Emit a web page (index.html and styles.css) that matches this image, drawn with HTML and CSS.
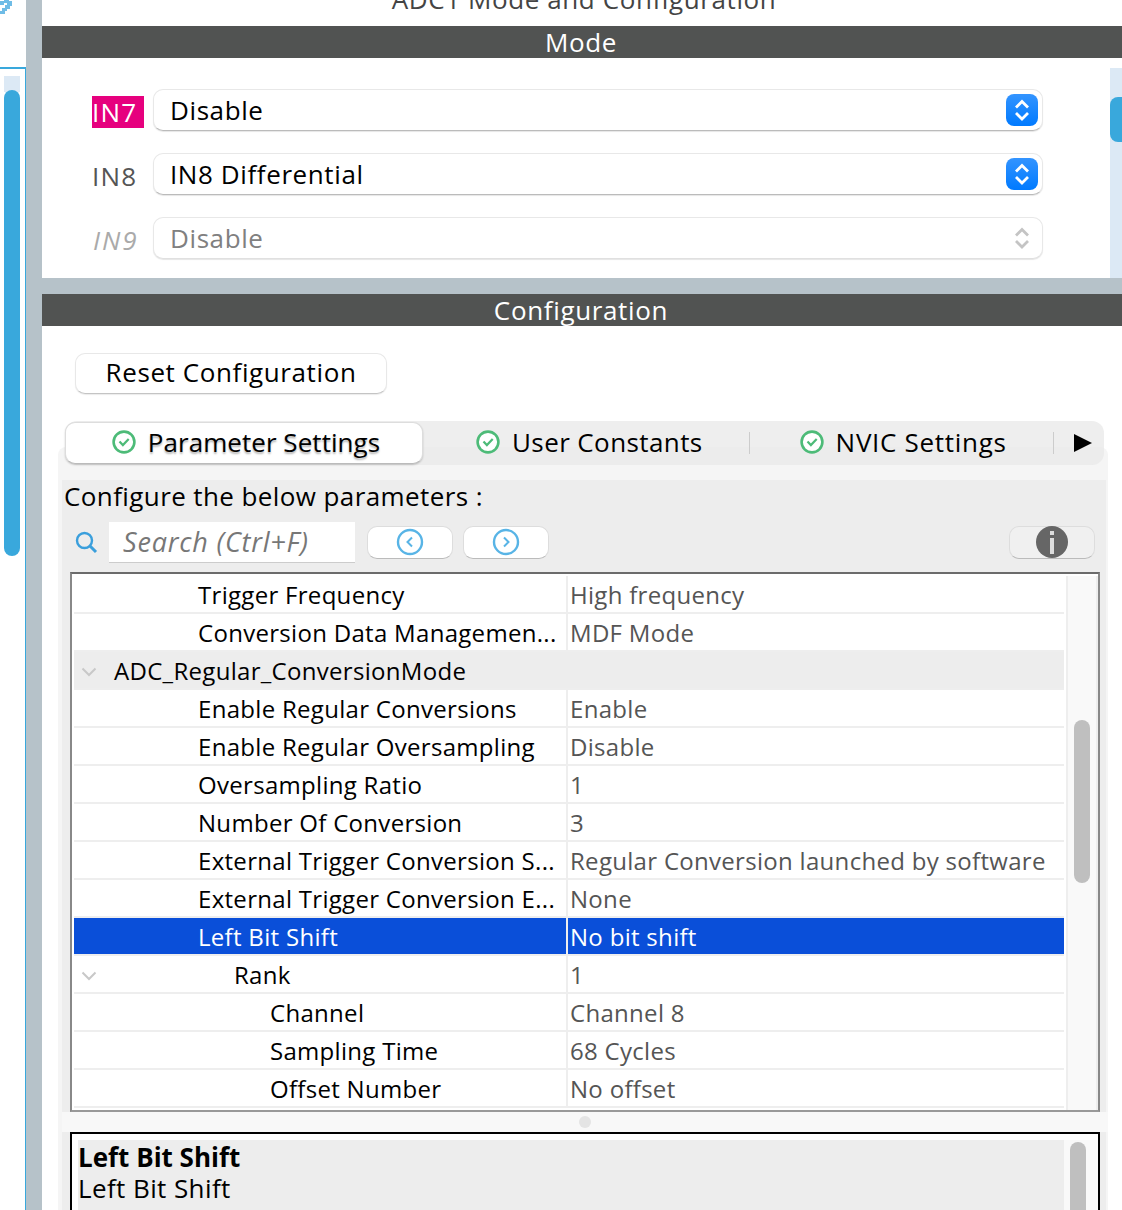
FILE: index.html
```html
<!DOCTYPE html>
<html lang="en">
<head>
<meta charset="utf-8">
<title>ADC1 Mode and Configuration</title>
<link rel="stylesheet" href="styles.css">
</head>
<body>
<svg class="defs" width="0" height="0" aria-hidden="true">
  <symbol id="ok" viewBox="0 0 24 24">
    <circle cx="12" cy="12" r="10.4" fill="#fff" stroke="#4dbb78" stroke-width="2.6"/>
    <path d="M7.5 11.5l3.4 3.6 5.8-6" fill="none" stroke="#4dbb78" stroke-width="2.2"/>
  </symbol>
  <symbol id="updown" viewBox="0 0 16 24">
    <path d="M2 9.500L8 3.500l6 6M2 15l6 6 6-6" fill="none" stroke="currentColor" stroke-width="2.800"/>
  </symbol>
  <symbol id="tw" viewBox="0 0 16 10">
    <path d="M1.500 1.500L8 8l6.500-6.500" fill="none" stroke="#c8c8c8" stroke-width="2"/>
  </symbol>
</svg>
<div class="side">
  <svg class="side-glyph" viewBox="0 0 12 14"><path d="M0 1h4V0h5v1h3v5h-2v3H7v2H5v3H0v-3h2V8h3V5h2V3H4v2H0z" fill="#6fbce6"/></svg>
  <div class="side-track"><div class="side-thumb"></div></div>
</div>
<div class="gutter"></div>
<main class="main">
  <div class="title"><span>ADC1 Mode and Configuration</span></div>
  <h2 class="bar">Mode</h2>
  <section class="mode">
    <div class="mode-rows">
      <div class="mode-row">
        <span class="pin pin-hot">IN7</span>
        <div class="select"><span>Disable</span><span class="stepper"><svg><use href="#updown"/></svg></span></div>
      </div>
      <div class="mode-row">
        <span class="pin">IN8</span>
        <div class="select"><span>IN8 Differential</span><span class="stepper"><svg><use href="#updown"/></svg></span></div>
      </div>
      <div class="mode-row off">
        <span class="pin">IN9</span>
        <div class="select"><span>Disable</span><span class="stepper"><svg><use href="#updown"/></svg></span></div>
      </div>
    </div>
    <div class="mode-track"><div class="mode-thumb"></div></div>
  </section>
  <div class="divider"></div>
  <h2 class="bar">Configuration</h2>
  <section class="config">
    <button class="reset">Reset Configuration</button>
    <div class="tabs">
      <div class="tab tab-on"><svg class="ok"><use href="#ok"/></svg><span>Parameter Settings</span></div>
      <div class="tab tab-user"><svg class="ok"><use href="#ok"/></svg><span>User Constants</span></div>
      <i class="tab-sep"></i>
      <div class="tab tab-nvic"><svg class="ok"><use href="#ok"/></svg><span>NVIC Settings</span></div>
      <i class="tab-sep"></i>
      <span class="tab-more"></span>
    </div>
    <div class="panel">
      <div class="panel-inner">
        <p class="lead">Configure the below parameters :</p>
        <div class="tools">
          <svg class="search" viewBox="0 0 24 24"><circle cx="10.500" cy="10.500" r="7.500" fill="none" stroke="#3a9fdc" stroke-width="2.400"/><path d="M16 16l6 6" stroke="#3a9fdc" stroke-width="3"/></svg>
          <div class="search-box">Search (Ctrl+F)</div>
          <button class="nav"><svg viewBox="0 0 28 28"><circle cx="14" cy="14" r="12" fill="none" stroke="#58b4e6" stroke-width="2.400"/><path d="M16 9.500L11.500 14l4.500 4.500" fill="none" stroke="#58b4e6" stroke-width="2"/></svg></button>
          <button class="nav"><svg viewBox="0 0 28 28"><circle cx="14" cy="14" r="12" fill="none" stroke="#58b4e6" stroke-width="2.400"/><path d="M12 9.500L16.500 14 12 18.500" fill="none" stroke="#58b4e6" stroke-width="2"/></svg></button>
          <button class="nav info"><svg viewBox="0 0 32 32"><circle cx="16" cy="16" r="16" fill="#666"/><rect x="14" y="5" width="4" height="4" fill="#ddd"/><rect x="14" y="12" width="4" height="16" fill="#ddd"/></svg></button>
        </div>
        <div class="table">
          <div class="rows">
            <div class="row l1"><span class="k">Trigger Frequency</span><span class="v">High frequency</span></div>
            <div class="row l1"><span class="k">Conversion Data Managemen...</span><span class="v">MDF Mode</span></div>
            <div class="row group"><span class="k"><svg class="tw"><use href="#tw"/></svg>ADC_Regular_ConversionMode</span><span class="v"></span></div>
            <div class="row l1"><span class="k">Enable Regular Conversions</span><span class="v">Enable</span></div>
            <div class="row l1"><span class="k">Enable Regular Oversampling</span><span class="v">Disable</span></div>
            <div class="row l1"><span class="k">Oversampling Ratio</span><span class="v">1</span></div>
            <div class="row l1"><span class="k">Number Of Conversion</span><span class="v">3</span></div>
            <div class="row l1"><span class="k">External Trigger Conversion S...</span><span class="v">Regular Conversion launched by software</span></div>
            <div class="row l1"><span class="k">External Trigger Conversion E...</span><span class="v">None</span></div>
            <div class="row l1 sel"><span class="k">Left Bit Shift</span><span class="v">No bit shift</span></div>
            <div class="row l2"><span class="k"><svg class="tw"><use href="#tw"/></svg>Rank</span><span class="v">1</span></div>
            <div class="row l3"><span class="k">Channel</span><span class="v">Channel 8</span></div>
            <div class="row l3"><span class="k">Sampling Time</span><span class="v">68 Cycles</span></div>
            <div class="row l3"><span class="k">Offset Number</span><span class="v">No offset</span></div>
          </div>
          <div class="vscroll"><div class="vthumb"></div></div>
        </div>
        <div class="sash"><i></i></div>
        <div class="desc">
          <div class="desc-text"><b>Left Bit Shift</b><span>Left Bit Shift</span></div>
          <div class="desc-scroll"><div class="desc-thumb"></div></div>
        </div>
      </div>
    </div>
  </section>
</main>
</body>
</html>
```
FILE: styles.css
```css
* { box-sizing: border-box; }
html, body { margin: 0; height: 1210px; overflow: hidden; }
body {
  display: flex;
  background: #fff;
  color: #000;
  font-family: "Open Sans", "DejaVu Sans", sans-serif;
  font-size: 26px;
  letter-spacing: 0.4px;
}
.defs { position: absolute; }
.side { width: 26px; flex: none; position: relative; padding-top: 67px; }
.side-glyph { position: absolute; left: 0; top: 0; width: 12px; height: 14px; }
.side-track {
  height: 1143px; width: 26px;
  border-top: 2px solid #39a8dc; border-right: 1px solid #39a8dc;
  padding: 7px 5px 0 4px;
  background: linear-gradient(#dce9f5, #dce9f5) 4px 7px / 16px 16px no-repeat;
}
.side-thumb { width: 16px; height: 466px; margin-top: 14px; background: #39a8dc; border-radius: 8px; }
.gutter { width: 16px; flex: none; background: #b6c2c9; }
.main { flex: 1; min-width: 0; height: 1210px; overflow: hidden; display: flex; flex-direction: column; }
.title { height: 26px; flex: none; overflow: hidden; text-align: center; color: #444; line-height: 26px; letter-spacing: .6px; }
.title span { display: block; margin: -14px 0 0 4px; white-space: nowrap; }
.bar {
  margin: 0; height: 32px; flex: none; background: #515352; color: #fff;
  font-size: 26px; font-weight: 400; line-height: 32px; text-align: center; padding-right: 2px; letter-spacing: .65px;
}
.mode { height: 220px; flex: none; display: flex; justify-content: space-between; padding-top: 10px; }
.mode-rows { width: 1001px; padding: 21px 0 0 50px; display: flex; flex-direction: column; gap: 22px; }
.mode-row { display: flex; align-items: center; height: 42px; }
.pin { width: 52px; height: 32px; line-height: 32px; margin: 4px 9px 0 0; color: #555; text-align: left; flex: none; letter-spacing: 1.2px; }
.pin-hot { background: #e6007e; color: #fff; }
.select {
  flex: 1; height: 42px; margin: 0; display: flex; justify-content: space-between; align-items: center; letter-spacing: .6px;
  padding: 0 4px 0 16px; border-radius: 10px; background: #fff;
  border: 1px solid #e8e8e8; border-bottom-color: #bbb; box-shadow: 0 1px 1px rgba(0,0,0,.1);
}
.stepper {
  width: 32px; height: 32px; border-radius: 8px; flex: none;
  background: linear-gradient(#3394ff, #007aff); color: #fff;
  display: flex; align-items: center; justify-content: center;
}
.stepper svg { width: 16px; height: 24px; }
.off .pin { color: #aaa; font-style: italic; letter-spacing: 2px; padding-left: 1px; }
.off .select { color: #808080; border-bottom-color: #e0e0e0; }
.off .stepper { background: none; color: #c4c4c4; }
.mode-track { width: 12px; background: #dce9f5; padding-top: 29px; }
.mode-thumb { height: 45px; background: #39a8dc; border-radius: 8px 0 0 8px; }
.divider { height: 16px; background: #b6c2c9; flex: none; }
.config { flex: 1; min-height: 0; padding: 27px 14px 0 16px; position: relative; display: flex; flex-direction: column; }
.reset {
  font: inherit; letter-spacing: .6px; width: 312px; height: 41px; flex: none; margin-left: 17px; padding: 0 0 5px; color: #000;
  background: #fff; border: 1px solid #e8e8e8; border-bottom-color: #c4c4c4; border-radius: 10px;
  box-shadow: 0 1px 1px rgba(0,0,0,.08);
}
.tabs {
  position: relative; z-index: 1; height: 44px; flex: none; margin: 27px 4px 0 7px; display: flex; align-items: center;
  background: rgba(232,232,232,.75); border-radius: 12px;
}
.tab { display: flex; align-items: center; gap: 12px; height: 100%; padding-bottom: 2px; }
.tab-on {
  width: 358px; height: 42px; justify-content: center; background: #fff; border-radius: 10px; letter-spacing: .05px;
  border: 1px solid #ddd; border-bottom-color: #bbb; box-shadow: 0 1px 2px rgba(0,0,0,.2);
  padding-left: 4px; text-shadow: 0 2px 2px rgba(0,0,0,.3);
}
.tab-user { margin-left: 53px; }
.tab-nvic { margin-left: 50px; letter-spacing: .7px; }
.tab-sep { width: 1px; height: 22px; background: #ccc; margin-left: 46px; }
.ok { width: 24px; height: 24px; flex: none; }
.tab-more {
  margin-left: 20px; width: 0; height: 0;
  border-left: 18px solid #000; border-top: 9px solid transparent; border-bottom: 9px solid transparent;
}
.panel {
  flex: 1; min-height: 0; margin-top: -18px; padding: 33px 2px 0 4px; background: #f5f5f5; border-radius: 8px 8px 0 0;
  width: 1050px; overflow: hidden;
}
.panel-inner { background: #ededed; height: 100%; padding: 0 6px 0 2px; }
.lead { margin: 0; height: 36px; line-height: 32px; }
.tools { display: flex; align-items: center; height: 56px; padding-bottom: 4px; }
.search { width: 24px; height: 24px; margin: 0 11px 0 10px; flex: none; }
.search-box {
  width: 246px; height: 41px; line-height: 40px; padding-left: 14px; background: #fff; color: #777; font-style: italic;
  border-bottom: 1px solid #ccc; margin-right: 12px; font-size: 27px; letter-spacing: .8px;
}
.nav {
  width: 86px; height: 33px; margin-right: 10px; padding: 0; background: #fff; border: 1px solid #ddd; border-bottom-color: #bbb;
  border-radius: 10px; display: flex; align-items: center; justify-content: center;
}
.nav svg { width: 28px; height: 28px; }
.nav.info { margin: 0 5px 0 auto; background: #f0f0f0; }
.nav.info svg { width: 32px; height: 32px; }
.table {
  width: 1030px; height: 540px; margin-left: 6px; display: flex; background: #fff; overflow: hidden;
  border: 2px solid #6b6b6b; border-bottom-color: #999; border-left-color: #888; border-right-color: #888; padding: 2px 0 0 2px;
  font-size: 24px; letter-spacing: .3px;
}
.rows { width: 990px; flex: none; }
.row { display: flex; height: 38px; border-bottom: 2px solid #eee; line-height: 36px; }
.k { width: 492px; flex: none; white-space: nowrap; display: flex; align-items: center; position: relative; padding-top: 2px; }
.v { flex: 1; border-left: 2px solid #eee; padding-left: 2px; color: #555; white-space: nowrap; line-height: 38px; }
.l1 .k { padding-left: 124px; }
.l2 .k { padding-left: 160px; }
.l3 .k { padding-left: 196px; }
.group { background: #ededed; }
.group .k { padding-left: 40px; }
.group .v { border-left: 0; }
.tw { position: absolute; left: 7px; top: 15px; width: 16px; height: 10px; }
.sel { background: #0a4fd9; color: #fff; }
.sel .v { color: #fff; border-left-color: #eee; }
.vscroll { flex: 1; background: #f9f9f9; border-left: 2px solid #eee; border-right: 2px solid #eee; padding: 144px 0 0 6px; margin-left: 2px; }
.vthumb { width: 16px; height: 163px; background: #bfbfbf; border-radius: 8px; }
.sash { height: 20px; background: #f8f8f8; width: 1046px; margin-left: -2px; display: flex; justify-content: center; align-items: center; }
.sash i { width: 12px; height: 12px; border-radius: 50%; background: #e4e4e4; }
.desc {
  width: 1030px; height: 200px; margin-left: 6px; display: flex; border: 2px solid #000; border-bottom: 0; background: #fff; padding: 6px 0 0 6px;
}
.desc-text { width: 986px; background: #ededed; display: flex; flex-direction: column; line-height: 32px; padding-top: 1px; }
.desc-text b { letter-spacing: 0; height: 31px; }
.desc-scroll { flex: 1; padding: 2px 0 0 6px; background: #f9f9f9; }
.desc-thumb { width: 16px; height: 180px; background: #bfbfbf; border-radius: 8px; }
```
